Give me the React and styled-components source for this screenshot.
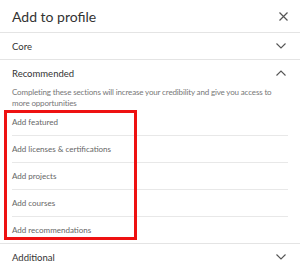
import styled, { createGlobalStyle } from "styled-components";

const GlobalStyle = createGlobalStyle`
  body {
    margin: 0;
    background: #fff;
    font-family: Lato, "Open Sans", "Liberation Sans", sans-serif;
  }
`;

const items = [
  "Add featured",
  "Add licenses & certifications",
  "Add projects",
  "Add courses",
  "Add recommendations",
];

const Chevron = ({ up }) => (
  <Icon width="10" height="6" viewBox="0 0 10 6">
    <path
      d={up ? "M0.5 5.5 L5 1 L9.5 5.5" : "M0.5 0.5 L5 5 L9.5 0.5"}
      fill="none"
      stroke="#555"
      strokeWidth="1.1"
    />
  </Icon>
);

const App = () => {
  return (
    <Modal>
      <GlobalStyle />
      <Header>
        <Title>Add to profile</Title>
        <Icon width="9" height="9" viewBox="0 0 9 9">
          <path d="M0.5 0.5 L8.5 8.5 M8.5 0.5 L0.5 8.5" stroke="#555" strokeWidth="1.2" />
        </Icon>
      </Header>
      <Section>
        <SectionHead>
          <Label>Core</Label>
          <Chevron />
        </SectionHead>
      </Section>
      <Section>
        <SectionHead>
          <Label>Recommended</Label>
          <Chevron up />
        </SectionHead>
        <Desc>
          Completing these sections will increase your credibility and give you access to
          more opportunities
        </Desc>
        <List>
          {items.map((item) => (
            <Item key={item}>{item}</Item>
          ))}
          <Highlight />
        </List>
      </Section>
      <Section>
        <SectionHead>
          <Label>Additional</Label>
          <Chevron />
        </SectionHead>
      </Section>
    </Modal>
  );
};

export default App;

/*
Styles
*/

const Modal = styled.div`
  width: 300px;
  height: 268px;
  overflow: hidden;
  background: #fff;
`;

const Header = styled.div`
  height: 32px;
  display: flex;
  align-items: center;
  justify-content: space-between;
  padding: 0 12px 0 12px;
  border-bottom: 1px solid #e4e4e4;
`;

const Title = styled.h2`
  margin: 0;
  font-size: 14px;
  font-weight: 400;
  color: #333;
`;

const Icon = styled.svg`
  display: block;
  flex: none;
`;

const Section = styled.div`
  border-bottom: 1px solid #e4e4e4;
`;

const SectionHead = styled.div`
  height: 26px;
  display: flex;
  align-items: center;
  justify-content: space-between;
  padding: 0 14px 0 12px;
`;

const Label = styled.span`
  font-size: 9.5px;
  color: #333;
`;

const Desc = styled.p`
  margin: 0;
  padding: 1px 12px 0;
  font-size: 8px;
  letter-spacing: -0.15px;
  line-height: 11px;
  color: #777;
`;

const List = styled.div`
  position: relative;
  display: flex;
  flex-direction: column;
`;

const Item = styled.div`
  height: 26px;
  margin: 0 12px;
  display: flex;
  align-items: center;
  font-size: 8px;
  color: #666;
  border-bottom: 1px solid #e8e8e8;

  &:nth-last-child(2) {
    border-bottom: none;
  }
`;

const Highlight = styled.div`
  position: absolute;
  left: 4px;
  top: 1px;
  width: 133px;
  height: 130px;
  box-sizing: border-box;
  border: 3px solid #ee1111;
`;
